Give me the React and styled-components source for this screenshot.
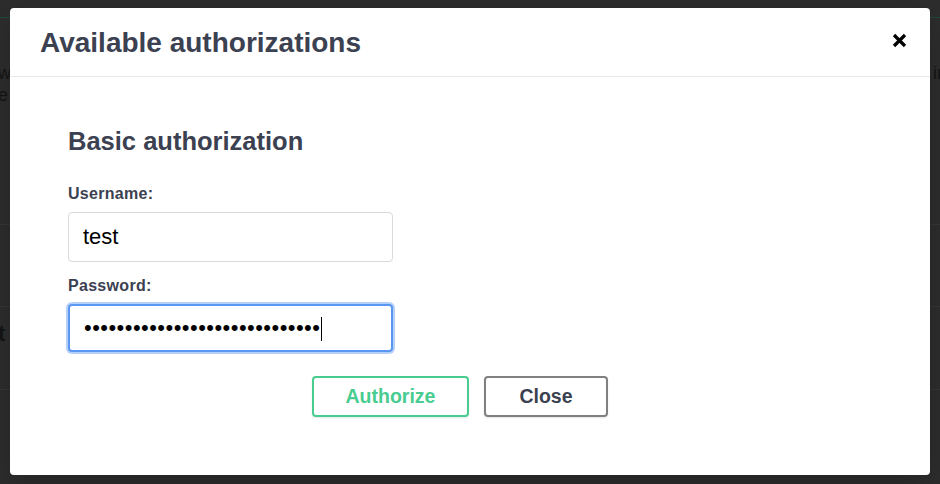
import React from "react";
import styled, { createGlobalStyle } from "styled-components";

const GlobalStyle = createGlobalStyle`
  html, body {
    margin: 0;
    padding: 0;
    background: #2d2d2d;
    font-family: "Liberation Sans", Arial, sans-serif;
  }
`;

const Page = styled.div`
  position: relative;
  width: 940px;
  height: 484px;
  overflow: hidden;
  background: #2d2d2d;
`;

// faint page content behind the backdrop
const BgTopBar = styled.div`
  height: 17px;
  border-bottom: 1px solid #1e4a35;
`;

const BgBlock = styled.div`
  height: ${(p) => p.h}px;
  border-bottom: 1px solid ${(p) => (p.line ? "#363636" : "transparent")};
  display: flex;
  justify-content: space-between;
  align-items: flex-start;
  padding-top: ${(p) => p.pt || 0}px;
  box-sizing: border-box;
  color: #151515;
  font-size: ${(p) => p.fs || 18}px;
  font-weight: ${(p) => (p.bold ? 700 : 400)};
  line-height: 22px;
`;

const BgText = styled.span`
  margin-left: -2px;
  margin-right: -3px;
`;

const Modal = styled.div`
  position: absolute;
  top: 8px;
  left: 10px;
  width: 920px;
  height: 467px;
  background: #fff;
  border-radius: 4px;
  box-shadow: 0 10px 30px rgba(0, 0, 0, 0.2);
  display: flex;
  flex-direction: column;
`;

const Header = styled.div`
  height: 68px;
  border-bottom: 1px solid #e8e8e8;
  display: flex;
  align-items: center;
  justify-content: space-between;
  padding: 0 21px 0 30px;
`;

const Title = styled.h3`
  margin: 0;
  font-size: 28px;
  font-weight: 700;
  color: #3b4151;
  padding-top: 1px;
`;

const CloseIcon = styled.button`
  border: none;
  background: none;
  padding: 0;
  margin-bottom: 4px;
  width: 20px;
  height: 20px;
  display: flex;
  align-items: center;
  justify-content: center;
  cursor: pointer;
`;

const Body = styled.div`
  padding: 49px 58px 0;
`;

const SchemeTitle = styled.h4`
  margin: 0 0 29px;
  font-size: 25.5px;
  line-height: 30px;
  font-weight: 700;
  color: #3b4151;
`;

const Label = styled.label`
  display: block;
  font-size: 16px;
  line-height: 18px;
  font-weight: 700;
  letter-spacing: 0.3px;
  color: #3b4151;
  margin-bottom: 9px;
`;

const Field = styled.div`
  position: relative;
  width: 325px;
  margin-bottom: ${(p) => p.mb}px;
`;

const Input = styled.input`
  display: block;
  box-sizing: border-box;
  width: 325px;
  height: ${(p) => (p.focused ? 48 : 50)}px;
  margin: ${(p) => (p.focused ? "1px 0" : "0")};
  padding: 0 14px;
  font-family: "Liberation Sans", Arial, sans-serif;
  font-size: 22px;
  color: #000;
  background: #fff;
  border-radius: 4px;
  outline: none;
  border: ${(p) => (p.focused ? "2px solid #5b97f0" : "1px solid #d9d9d9")};
  box-shadow: ${(p) => (p.focused ? "0 0 0 2px rgba(91, 151, 240, 0.45)" : "none")};
  letter-spacing: ${(p) => (p.type === "password" ? "0.45px" : "0")};
`;

const Caret = styled.span`
  position: absolute;
  left: 253px;
  top: 13px;
  width: 1px;
  height: 24px;
  background: #000;
`;

const Actions = styled.div`
  display: flex;
  justify-content: center;
  gap: 15px;
  margin-top: 24px;
  padding-right: 20px;
`;

const Btn = styled.button`
  box-sizing: border-box;
  width: ${(p) => p.w}px;
  height: 41px;
  background: transparent;
  border: 2px solid ${(p) => (p.green ? "#49cc90" : "#808080")};
  border-radius: 4px;
  color: ${(p) => (p.green ? "#49cc90" : "#3b4151")};
  font-family: "Liberation Sans", Arial, sans-serif;
  font-size: 19.5px;
  font-weight: 700;
  box-shadow: 0 1px 2px rgba(0, 0, 0, 0.1);
  cursor: pointer;
`;

export default function App() {
  return (
    <>
      <GlobalStyle />
      <Page>
        <BgTopBar />
        <BgBlock h={134} pt={44}>
          <BgText>
            w<br />e
          </BgText>
          <BgText>ir</BgText>
        </BgBlock>
        <BgBlock h={73} line />
        <BgBlock h={82} line />
        <BgBlock h={83} pt={16} bold fs={22} line>
          <BgText>t</BgText>
        </BgBlock>
        <BgBlock h={80} />

        <Modal>
          <Header>
            <Title>Available authorizations</Title>
            <CloseIcon aria-label="close">
              <svg width="15" height="15" viewBox="0 0 15 15">
                <path
                  d="M2 2 L13 13 M13 2 L2 13"
                  stroke="#000"
                  strokeWidth="3.2"
                  strokeLinecap="butt"
                />
              </svg>
            </CloseIcon>
          </Header>
          <Body>
            <SchemeTitle>Basic authorization</SchemeTitle>
            <Label>Username:</Label>
            <Field mb={15}>
              <Input type="text" value="test" readOnly />
            </Field>
            <Label>Password:</Label>
            <Field mb={0}>
              <Input
                type="password"
                value="abcdefghijklmnopqrstuvwxyzabc"
                readOnly
                focused
              />
              <Caret />
            </Field>
            <Actions>
              <Btn green w={157}>Authorize</Btn>
              <Btn w={124}>Close</Btn>
            </Actions>
          </Body>
        </Modal>
      </Page>
    </>
  );
}
